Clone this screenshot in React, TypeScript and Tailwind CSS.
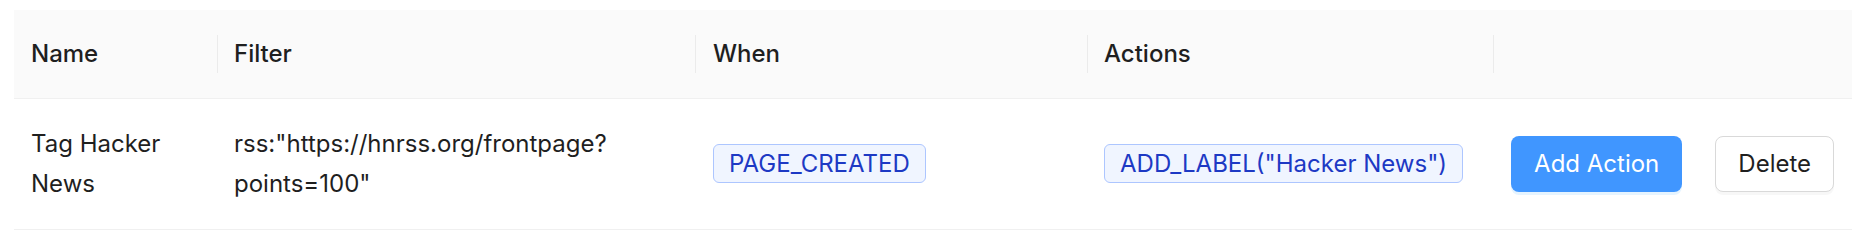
import React from "react";

const divider =
  "relative before:absolute before:left-0 before:top-1/2 before:h-[38px] before:w-px before:-translate-y-1/2 before:bg-[#ebebeb] before:content-['']";

function Tag({ children }: { children: React.ReactNode }) {
  return (
    <span className="inline-block h-[39px] rounded-[6px] border border-[#adc6ff] bg-[#f0f5ff] px-[15px] leading-[37px] text-[#1d39c4] whitespace-nowrap">
      {children}
    </span>
  );
}

export default function App() {
  return (
    <div className="min-h-[232px] bg-white pl-[14px] pt-[10px] font-['Inter','Liberation_Sans',sans-serif] text-[24px] leading-[40px] text-[#1f1f1f]">
      <table className="w-[1838px] table-fixed border-collapse">
        <colgroup>
          <col className="w-[203px]" />
          <col className="w-[478px]" />
          <col className="w-[392px]" />
          <col className="w-[406px]" />
          <col className="w-[359px]" />
        </colgroup>
        <thead>
          <tr className="bg-[#fafafa] text-left">
            <th className="border-b border-[#f0f0f0] px-[17px] py-[24px] font-medium">Name</th>
            <th className={`border-b border-[#f0f0f0] px-[17px] py-[24px] font-medium ${divider}`}>
              Filter
            </th>
            <th className={`border-b border-[#f0f0f0] px-[18px] py-[24px] font-medium ${divider}`}>
              When
            </th>
            <th className={`border-b border-[#f0f0f0] px-[17px] py-[24px] font-medium ${divider}`}>
              Actions
            </th>
            <th className={`border-b border-[#f0f0f0] px-[17px] py-[24px] font-medium ${divider}`}></th>
          </tr>
        </thead>
        <tbody>
          <tr>
            <td className="border-b border-[#f0f0f0] px-[17px] py-[25px] align-middle">
              Tag Hacker News
            </td>
            <td className="border-b border-[#f0f0f0] px-[17px] py-[25px] align-middle break-words">
              rss:"https://hnrss.org/frontpage?
              <br />
              points=100"
            </td>
            <td className="border-b border-[#f0f0f0] px-[18px] py-[25px] align-middle">
              <Tag>PAGE_CREATED</Tag>
            </td>
            <td className="border-b border-[#f0f0f0] px-[17px] py-[25px] align-middle">
              <Tag>ADD_LABEL("Hacker News")</Tag>
            </td>
            <td className="border-b border-[#f0f0f0] px-[18px] py-[25px] align-middle">
              <div className="flex items-center gap-[33px]">
                <button className="h-[56px] w-[172px] rounded-[8px] bg-[#4096ff] text-white shadow-[0_3px_0_rgba(5,145,255,0.1)]">
                  Add Action
                </button>
                <button className="h-[56px] w-[119px] rounded-[8px] border border-[#d9d9d9] bg-white text-[#1f1f1f] shadow-[0_3px_0_rgba(0,0,0,0.03)]">
                  Delete
                </button>
              </div>
            </td>
          </tr>
        </tbody>
      </table>
    </div>
  );
}
